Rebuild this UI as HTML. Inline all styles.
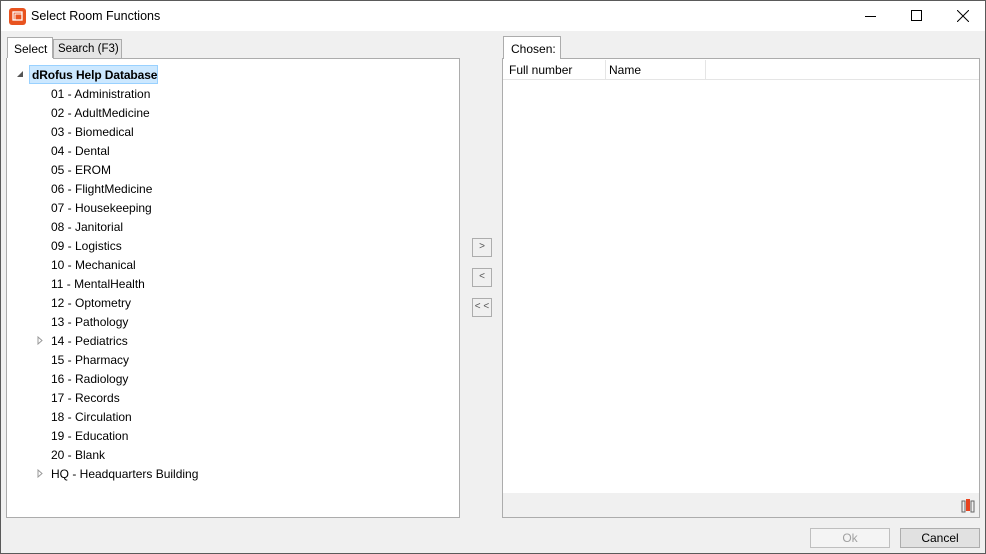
<!DOCTYPE html>
<html><head><style>
*{margin:0;padding:0;box-sizing:border-box}
body{width:986px;height:554px;background:#f0f0f0;font-family:"Liberation Sans",sans-serif;font-size:12px;color:#000;position:relative;overflow:hidden}
.a{position:absolute;white-space:nowrap}
#win{left:0;top:0;width:986px;height:554px;border:1px solid #5a5a5a}
#title{left:1px;top:1px;width:984px;height:30px;background:#fff}
.tree div{position:absolute;left:51px;white-space:nowrap}
.btn{border:1px solid #adadad;background:#f0f0f0;width:20px;height:19px;font-size:10px;color:#555;text-align:center;line-height:16px}
</style></head><body>
<div class="a" id="win"></div>
<div class="a" id="title">
<svg class="a" style="left:8px;top:7px" width="17" height="17"><rect x="0" y="0" width="17" height="17" rx="3" fill="#e8531f"/><rect x="4" y="4" width="9" height="8" fill="none" stroke="#fff" stroke-width="1.3"/><rect x="6" y="6" width="7" height="6" fill="none" stroke="#fff" stroke-width="1"/></svg>
<div class="a" style="left:30px;top:8px;font-size:12.5px">Select Room Functions</div>
<div class="a" style="left:864px;top:15px;width:11px;height:1px;background:#000"></div>
<div class="a" style="left:910px;top:9px;width:11px;height:11px;border:1px solid #000"></div>
<svg class="a" style="left:956px;top:9px" width="12" height="12"><path d="M0 0L12 12M12 0L0 12" stroke="#000" stroke-width="1"/></svg>
</div>
<div class="a" style="left:53px;top:39px;width:69px;height:20px;border:1px solid #acacac;background:#e5e5e5;padding:3px 0 0 4px;font-size:11.5px">Search (F3)</div>
<div class="a" style="left:7px;top:37px;width:46px;height:22px;border:1px solid #acacac;border-bottom:none;background:#fff;padding:4px 0 0 6px">Select</div>
<div class="a" style="left:6px;top:58px;width:454px;height:460px;border:1px solid #acacac;border-top:none;background:#fff"></div>
<div class="a" style="left:53px;top:58px;width:407px;height:1px;background:#acacac"></div>
<div class="a" style="left:6px;top:58px;width:1px;height:1px;background:#acacac"></div>
<svg class="a" style="left:16px;top:70px" width="8" height="8"><path d="M7 1L7 7L1 7Z" fill="#555"/></svg>
<div class="a" style="left:29px;top:65px;width:129px;height:19px;background:#cce8ff;border:1px solid #99d1ff;font-weight:bold;font-size:12px;padding:2px 0 0 2px;letter-spacing:-0.1px">dRofus Help Database</div>
<div class="tree">
<div style="top:87px">01 - Administration</div>
<div style="top:106px">02 - AdultMedicine</div>
<div style="top:125px">03 - Biomedical</div>
<div style="top:144px">04 - Dental</div>
<div style="top:163px">05 - EROM</div>
<div style="top:182px">06 - FlightMedicine</div>
<div style="top:201px">07 - Housekeeping</div>
<div style="top:220px">08 - Janitorial</div>
<div style="top:239px">09 - Logistics</div>
<div style="top:258px">10 - Mechanical</div>
<div style="top:277px">11 - MentalHealth</div>
<div style="top:296px">12 - Optometry</div>
<div style="top:315px">13 - Pathology</div>
<div style="top:334px">14 - Pediatrics</div>
<div style="top:353px">15 - Pharmacy</div>
<div style="top:372px">16 - Radiology</div>
<div style="top:391px">17 - Records</div>
<div style="top:410px">18 - Circulation</div>
<div style="top:429px">19 - Education</div>
<div style="top:448px">20 - Blank</div>
<div style="top:467px">HQ - Headquarters Building</div>
</div>
<svg class="a" style="left:37px;top:336px" width="6" height="9"><path d="M1 1L5 4.5L1 8Z" fill="none" stroke="#999"/></svg>
<svg class="a" style="left:37px;top:469px" width="6" height="9"><path d="M1 1L5 4.5L1 8Z" fill="none" stroke="#999"/></svg>
<div class="a btn" style="left:472px;top:238px">&gt;</div>
<div class="a btn" style="left:472px;top:268px">&lt;</div>
<div class="a btn" style="left:472px;top:298px">&lt; &lt;</div>
<div class="a" style="left:502px;top:58px;width:478px;height:460px;border:1px solid #acacac;background:#fff"></div>
<div class="a" style="left:503px;top:36px;width:58px;height:23px;border:1px solid #acacac;border-bottom:none;background:#fff;padding:5px 0 0 7px">Chosen:</div>
<div class="a" style="left:503px;top:60px;width:476px;height:20px;border-bottom:1px solid #e5e5e5"></div>
<div class="a" style="left:509px;top:63px">Full number</div>
<div class="a" style="left:605px;top:60px;width:1px;height:20px;background:#e5e5e5"></div>
<div class="a" style="left:609px;top:63px">Name</div>
<div class="a" style="left:705px;top:60px;width:1px;height:20px;background:#e5e5e5"></div>
<div class="a" style="left:503px;top:493px;width:476px;height:24px;background:#f0f0f0"></div>
<svg class="a" style="left:961px;top:498px" width="14" height="15"><rect x="1" y="3" width="3" height="11" fill="none" stroke="#666"/><rect x="5" y="1" width="4" height="12" fill="#e8431f"/><rect x="10" y="3" width="3" height="11" fill="none" stroke="#666"/></svg>
<div class="a" style="left:810px;top:528px;width:80px;height:20px;border:1px solid #bfbfbf;background:#f4f4f4;color:#a0a0a0;text-align:center;line-height:18px">Ok</div>
<div class="a" style="left:900px;top:528px;width:80px;height:20px;border:1px solid #adadad;background:#e1e1e1;text-align:center;line-height:18px">Cancel</div>
</body></html>
